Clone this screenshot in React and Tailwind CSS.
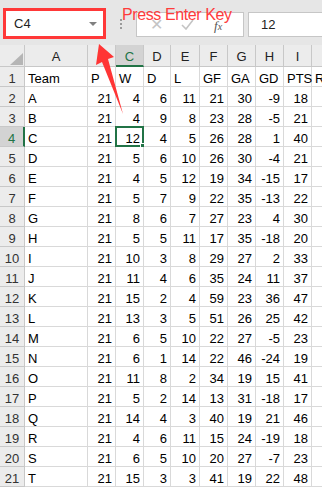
import React from "react";

const cols = ["A", "B", "C", "D", "E", "F", "G", "H", "I", "J"];

const data = [
  ["Team", "P", "W", "D", "L", "GF", "GA", "GD", "PTS", "Rank"],
  ["A", 21, 4, 6, 11, 21, 30, -9, 18],
  ["B", 21, 4, 9, 8, 23, 28, -5, 21],
  ["C", 21, 12, 4, 5, 26, 28, 1, 40],
  ["D", 21, 5, 6, 10, 26, 30, -4, 21],
  ["E", 21, 4, 5, 12, 19, 34, -15, 17],
  ["F", 21, 5, 7, 9, 22, 35, -13, 22],
  ["G", 21, 8, 6, 7, 27, 23, 4, 30],
  ["H", 21, 5, 5, 11, 17, 35, -18, 20],
  ["I", 21, 10, 3, 8, 29, 27, 2, 33],
  ["J", 21, 11, 4, 6, 35, 24, 11, 37],
  ["K", 21, 15, 2, 4, 59, 23, 36, 47],
  ["L", 21, 13, 3, 5, 51, 26, 25, 42],
  ["M", 21, 6, 5, 10, 22, 27, -5, 23],
  ["N", 21, 6, 1, 14, 22, 46, -24, 19],
  ["O", 21, 11, 8, 2, 34, 19, 15, 41],
  ["P", 21, 5, 2, 14, 13, 31, -18, 17],
  ["Q", 21, 14, 4, 3, 40, 19, 21, 46],
  ["R", 21, 4, 6, 11, 15, 24, -19, 18],
  ["S", 21, 6, 5, 10, 20, 27, -7, 23],
  ["T", 21, 15, 3, 3, 41, 19, 22, 48],
];

function Toolbar() {
  return (
    <div className="relative h-[45px] bg-[#e6e6e6] flex items-start">
      {/* name box */}
      <div className="ml-[3px] mt-[8px] w-[103px] h-[31px] border-[3px] border-[#ff3838] bg-white flex items-center justify-between pl-[8px] pr-[6px]">
        <span className="text-[13px] text-[#222]">C4</span>
        <span className="w-0 h-0 border-l-[4px] border-r-[4px] border-t-[4px] border-l-transparent border-r-transparent border-t-[#808080]" />
      </div>
      {/* separator dots */}
      <div className="ml-[14px] mt-[19px] flex flex-col gap-[2px]">
        <span className="w-[2px] h-[2px] bg-[#9a9a9a]" />
        <span className="w-[2px] h-[2px] bg-[#9a9a9a]" />
        <span className="w-[2px] h-[2px] bg-[#9a9a9a]" />
      </div>
      {/* cancel / enter / fx */}
      <div className="ml-[14px] mt-[12px] w-[108px] h-[25px] bg-white border border-[#c6c6c6] flex items-center">
        <span className="ml-[13px] text-[16px] leading-none text-[#c4c4c4]">✕</span>
        <svg className="ml-[18px]" width="13" height="11" viewBox="0 0 13 11">
          <path d="M1 6 L5 10 L12 1" stroke="#c4c4c4" strokeWidth="1.6" fill="none" />
        </svg>
        <span className="ml-[20px] mt-[2px] text-[13px] italic font-['Liberation_Serif',serif] text-[#555]">
          f<span className="text-[10px]">x</span>
        </span>
      </div>
      {/* formula content */}
      <div className="ml-[4px] mt-[12px] flex-1 h-[25px] bg-white border border-[#c6c6c6] border-r-0 flex items-center pl-[12px]">
        <span className="text-[13px] text-[#222]">12</span>
      </div>
      <span className="absolute left-[122px] top-[4px] text-[16px] tracking-[-0.4px] text-[#ff3b3b] leading-[22px]">
        Press Enter Key
      </span>
    </div>
  );
}

function Sheet() {
  return (
    <div className="grid w-[340px] grid-cols-[25px_63px_28px_28px_27px_29px_28px_28px_28px_28px_28px] grid-rows-[22px_repeat(21,20px)] text-[13px] text-black">
      {/* corner */}
      <div className="relative bg-[#ececec] border-r border-b border-[#c8c8c8]">
        <svg className="absolute left-[10px] top-[8px]" width="13" height="12" viewBox="0 0 13 12">
          <polygon points="13,0 13,12 0,12" fill="#b5b5b5" />
        </svg>
      </div>
      {cols.map((c) => (
        <div
          key={c}
          className={
            c === "C"
              ? "bg-[#d3d3d3] border-r border-b-2 border-r-[#c8c8c8] border-b-[#217346] text-[#217346] text-center pt-[3px] leading-[18px]"
              : "bg-[#ececec] border-r border-b border-[#c8c8c8] text-[#222] text-center pt-[3px] leading-[18px]"
          }
        >
          {c}
        </div>
      ))}

      {data.map((row, r) => {
        const rowNo = r + 1;
        const isSel = rowNo === 4;
        return (
          <React.Fragment key={rowNo}>
            <div
              className={
                isSel
                  ? "bg-[#d3d3d3] border-r-2 border-b border-r-[#217346] border-b-[#c8c8c8] text-[#217346] text-center pt-[4px] leading-[16px]"
                  : "bg-[#ececec] border-r border-b border-[#c8c8c8] text-[#333] text-center pt-[4px] leading-[16px]"
              }
            >
              {rowNo}
            </div>
            {cols.map((c, i) => {
              const v = row[i];
              const isText = typeof v === "string";
              const selCell = isSel && c === "C";
              return (
                <div
                  key={c}
                  className={
                    "relative bg-white border-r border-b border-[#d9d9d9] pt-[4px] leading-[16px] whitespace-nowrap " +
                    (isText ? "text-left pl-[3px]" : "text-right pr-[3px]")
                  }
                >
                  {v}
                  {selCell && (
                    <>
                      <div className="absolute -left-[1px] -top-[1px] -right-[1px] -bottom-[1px] border-2 border-[#217346]" />
                      <div className="absolute -right-[4px] -bottom-[4px] w-[7px] h-[7px] bg-[#217346] border border-white" />
                    </>
                  )}
                </div>
              );
            })}
          </React.Fragment>
        );
      })}
    </div>
  );
}

export default function App() {
  return (
    <div className="relative w-[322px] h-[487px] overflow-hidden bg-white font-['Liberation_Sans',Arial,sans-serif]">
      <Toolbar />
      <Sheet />
      <svg
        className="absolute left-0 top-0 pointer-events-none"
        width="322"
        height="487"
        viewBox="0 0 322 487"
      >
        <polygon
          points="99,44 114,57 108,59 123,114 102,62 96,65"
          fill="#ff3535"
        />
      </svg>
    </div>
  );
}
